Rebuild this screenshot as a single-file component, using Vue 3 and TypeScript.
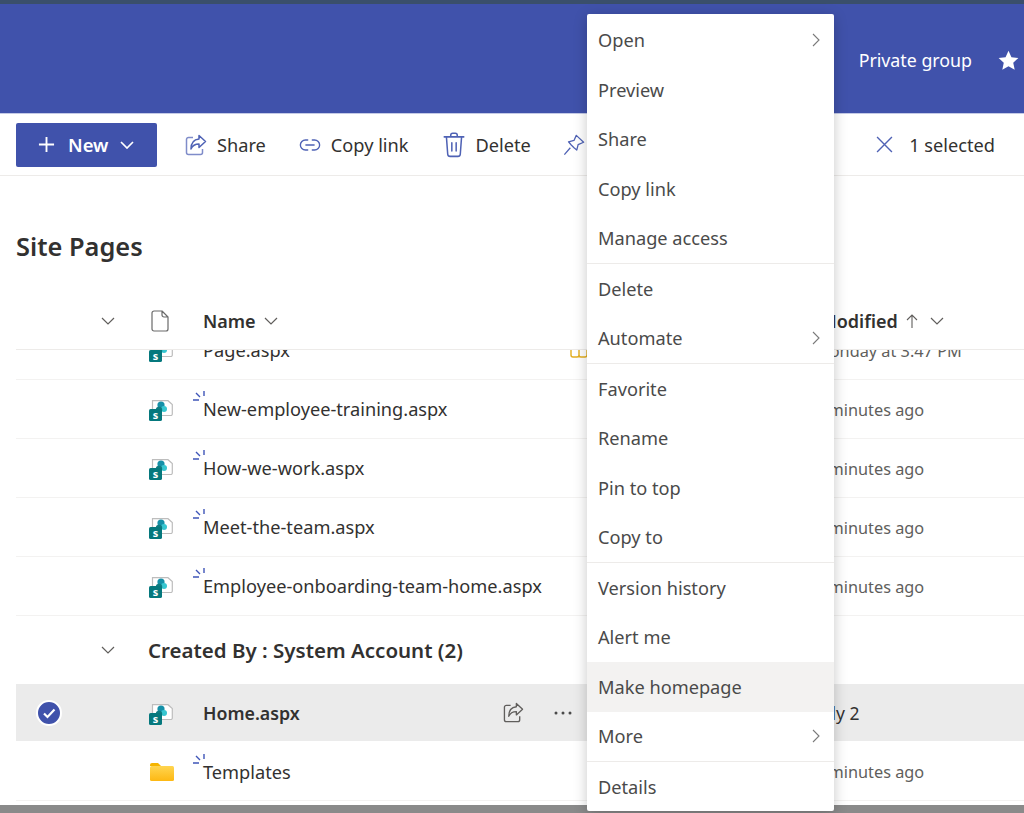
<script setup lang="ts">
interface FileRow {
  name: string
  modified: string
  kind: 'page' | 'folder'
  fresh?: boolean
  selected?: boolean
  badge?: boolean
}

interface MenuItem {
  label: string
  submenu?: boolean
  hover?: boolean
}

const topRows: FileRow[] = [
  { name: 'Page.aspx', modified: 'Monday at 3:47 PM', kind: 'page', badge: true },
  { name: 'New-employee-training.aspx', modified: '6 minutes ago', kind: 'page', fresh: true },
  { name: 'How-we-work.aspx', modified: '6 minutes ago', kind: 'page', fresh: true },
  { name: 'Meet-the-team.aspx', modified: '6 minutes ago', kind: 'page', fresh: true },
  { name: 'Employee-onboarding-team-home.aspx', modified: '6 minutes ago', kind: 'page', fresh: true }
]

const bottomRows: FileRow[] = [
  { name: 'Home.aspx', modified: 'July 2', kind: 'page', selected: true },
  { name: 'Templates', modified: '6 minutes ago', kind: 'folder', fresh: true }
]

const menuGroups: MenuItem[][] = [
  [
    { label: 'Open', submenu: true },
    { label: 'Preview' },
    { label: 'Share' },
    { label: 'Copy link' },
    { label: 'Manage access' }
  ],
  [{ label: 'Delete' }, { label: 'Automate', submenu: true }],
  [{ label: 'Favorite' }, { label: 'Rename' }, { label: 'Pin to top' }, { label: 'Copy to' }],
  [
    { label: 'Version history' },
    { label: 'Alert me' },
    { label: 'Make homepage', hover: true },
    { label: 'More', submenu: true }
  ],
  [{ label: 'Details' }]
]

// group header sits between the two row lists
const listSections = [
  { key: 'top', title: '', rows: topRows },
  { key: 'system', title: 'Created By : System Account (2)', rows: bottomRows }
]
</script>

<template>
  <div class="page">
    <header class="banner">
      <span class="privacy">Private group</span>
      <svg class="star" viewBox="0 0 20 20"><path d="M10 .8l2.800 6.100 6.600.7-4.900 4.500 1.400 6.600L10 15.400l-5.900 3.300 1.400-6.600L.6 7.600l6.600-.7z" fill="#fff" /></svg>
    </header>

    <div class="toolbar">
      <button class="new-btn">
        <svg class="new-plus" viewBox="0 0 18 18"><path d="M9 1v16M1 9h16" stroke="#fff" stroke-width="2" fill="none" /></svg>
        <span>New</span>
        <svg class="new-chevron" viewBox="0 0 14 8"><path d="M1 1l6 6 6-6" stroke="#fff" stroke-width="1.700" fill="none" /></svg>
      </button>
      <div class="cmd cmd-share">
        <svg class="cmd-icon" viewBox="0 0 22 22" fill="none" stroke="#4f62b5" stroke-width="1.500">
          <path d="M8 3.500H3.500a2 2 0 0 0-2 2v13a2 2 0 0 0 2 2h12a2 2 0 0 0 2-2v-3.500" stroke="#7f8cc9" />
          <path d="M14 1.500l6.500 6-6.500 6V10c-4 0-6.500 1.500-8 5 0-6 3-9.500 8-10z" stroke-linejoin="round" />
        </svg>
        <span>Share</span>
      </div>
      <div class="cmd cmd-link">
        <svg class="cmd-icon" viewBox="0 0 24 14" fill="none" stroke="#4f62b5" stroke-width="1.500">
          <path d="M9.500 1.500H7a5.500 5.500 0 0 0 0 11h2.500M14.500 1.500H17a5.500 5.500 0 0 1 0 11h-2.500M7.500 7h9" stroke-linecap="round" />
        </svg>
        <span>Copy link</span>
      </div>
      <div class="cmd cmd-delete">
        <svg class="cmd-icon trash" viewBox="0 0 20 24" fill="none" stroke="#4f62b5" stroke-width="1.400">
          <path d="M1 4.500h18M7 4.500V3a1.800 1.800 0 0 1 1.800-1.800h2.400A1.800 1.800 0 0 1 13 3v1.500M3 4.500l1.200 16a2.200 2.200 0 0 0 2.200 2h7.200a2.200 2.200 0 0 0 2.200-2l1.200-16M8 10v7.500M12 10v7.500" stroke-linecap="round" />
        </svg>
        <span>Delete</span>
      </div>
      <div class="cmd cmd-pin">
        <svg class="cmd-icon" viewBox="0 0 24 24" fill="none" stroke="#4f62b5" stroke-width="1.400">
          <path d="M14.500 1.500l8 7.500-6 2.500-1.500 6-3-2.500-3-3-3-3.500 6-1.500zM8 15l-6.500 7.500" stroke-linejoin="round" />
        </svg>
      </div>
      <div class="selection">
        <svg class="clear" viewBox="0 0 16 16"><path d="M1 1l14 14M15 1L1 15" stroke="#4f62b5" stroke-width="1.300" fill="none" /></svg>
        <span>1 selected</span>
      </div>
    </div>

    <h1 class="title">Site Pages</h1>

    <div class="columns">
      <span class="cell-check"></span>
      <span class="cell-chevron">
        <svg class="chevron" viewBox="0 0 14 8"><path d="M1 1l6 6 6-6" stroke="#605e5c" stroke-width="1.200" fill="none" /></svg>
      </span>
      <span class="cell-icon">
        <svg class="doc-head" viewBox="0 0 18 22" fill="none" stroke="#6a6a6a" stroke-width="1.200">
          <path d="M3 1h8l6 6v12a2 2 0 0 1-2 2H3a2 2 0 0 1-2-2V3a2 2 0 0 1 2-2zM11 1v4a2 2 0 0 0 2 2h4" stroke-linejoin="round" />
        </svg>
      </span>
      <span class="col-name">
        Name
        <svg class="chevron" viewBox="0 0 14 8"><path d="M1 1l6 6 6-6" stroke="#605e5c" stroke-width="1.200" fill="none" /></svg>
      </span>
      <span class="col-modified">
        Modified
        <svg class="sort-arrow" viewBox="0 0 12 14"><path d="M6 14V1M1 6l5-5 5 5" stroke="#605e5c" stroke-width="1.100" fill="none" /></svg>
        <svg class="chevron" viewBox="0 0 14 8"><path d="M1 1l6 6 6-6" stroke="#605e5c" stroke-width="1.200" fill="none" /></svg>
      </span>
    </div>

    <div class="list">
      <section v-for="section in listSections" :key="section.key">
        <div v-if="section.title" class="group-row">
          <span class="cell-check"></span>
          <span class="cell-chevron">
            <svg class="chevron" viewBox="0 0 14 8"><path d="M1 1l6 6 6-6" stroke="#605e5c" stroke-width="1.200" fill="none" /></svg>
          </span>
          <strong class="group-title">{{ section.title }}</strong>
        </div>
        <div
          v-for="row in section.rows"
          :key="row.name"
          class="row"
          :class="{ selected: row.selected }"
        >
          <span class="cell-check">
            <svg v-if="row.selected" class="check" viewBox="0 0 26 26">
              <circle cx="13" cy="13" r="12" fill="#4052ab" stroke="#fff" stroke-width="2" />
              <path d="M8 13.500l3.500 3.500 7-7.500" stroke="#fff" stroke-width="2.200" fill="none" />
            </svg>
          </span>
          <span class="cell-chevron"></span>
          <span class="cell-icon">
            <svg v-if="row.kind === 'page'" class="file-icon" viewBox="0 0 24 21">
              <path d="M3.500 .7h15.500l4.300 3.800v9.500a1.500 1.500 0 0 1-1.500 1.500H3.500z" fill="#fff" stroke="#bdbdbd" stroke-width="1.200" />
              <circle cx="12" cy="5" r="3.600" fill="#1490a8" />
              <circle cx="15" cy="9" r="3" fill="#37c6d0" />
              <circle cx="10" cy="10" r="3.200" fill="#0f7b80" />
              <rect x="0" y="9" width="13" height="12" rx="1.600" fill="#05787d" />
              <text x="6.500" y="18.700" class="file-s">s</text>
            </svg>
            <svg v-else class="folder-icon" viewBox="0 0 26 20">
              <defs>
                <linearGradient id="folder-fill" x1="0" y1="0" x2="0" y2="1">
                  <stop offset="0" stop-color="#ffd550" />
                  <stop offset="1" stop-color="#fdb813" />
                </linearGradient>
              </defs>
              <path d="M1 3a2 2 0 0 1 2-2h6l3 3H1z" fill="#f5b400" />
              <rect x="1" y="4" width="24" height="15" rx="1.500" fill="url(#folder-fill)" />
            </svg>
          </span>
          <span class="col-name">
            <svg v-if="row.fresh" class="sparkle" viewBox="0 0 12 12" fill="none" stroke="#3f55b8" stroke-width="1.400">
              <path d="M11 0v5M3 2l4 4M0 9h6" />
            </svg>
            <span class="file-name">{{ row.name }}</span>
            <svg v-if="row.badge" class="book" viewBox="0 0 18 16" fill="none" stroke="#e3ae1f" stroke-width="1.400">
              <path d="M1 1v12q0 2 2 2h4q2 0 2-2 0 2 2 2h4q2 0 2-2V1M9 1v12" />
            </svg>
            <span v-if="row.selected" class="row-actions">
              <svg class="row-share" viewBox="0 0 22 22" fill="none" stroke="#605e5c" stroke-width="1.400">
                <path d="M8 3.500H3.500a2 2 0 0 0-2 2v13a2 2 0 0 0 2 2h12a2 2 0 0 0 2-2v-3.500" />
                <path d="M14 1.500l6.500 6-6.500 6V10c-4 0-6.500 1.500-8 5 0-6 3-9.500 8-10z" stroke-linejoin="round" />
              </svg>
              <svg class="row-more" viewBox="0 0 18 4" fill="#4a4a4a">
                <circle cx="2" cy="2" r="1.500" /><circle cx="9" cy="2" r="1.500" /><circle cx="16" cy="2" r="1.500" />
              </svg>
            </span>
          </span>
          <span class="col-when">{{ row.modified }}</span>
        </div>
      </section>
    </div>

    <div class="scroll-edge"></div>

    <nav class="menu">
      <div v-for="(group, i) in menuGroups" :key="i" class="menu-group">
        <div
          v-for="item in group"
          :key="item.label"
          class="menu-item"
          :class="{ hover: item.hover }"
        >
          <span>{{ item.label }}</span>
          <svg v-if="item.submenu" class="menu-arrow" viewBox="0 0 8 14"><path d="M1 1l6 6-6 6" stroke="#7a7a7a" stroke-width="1.100" fill="none" /></svg>
        </div>
      </div>
    </nav>
  </div>
</template>

<style scoped>
.page {
  position: relative;
  display: flex;
  flex-direction: column;
  width: 1024px;
  height: 813px;
  overflow: hidden;
  background: #fff;
  color: #323130;
  font-family: "Noto Sans", "Open Sans", sans-serif;
  font-size: 18.2px;
}

.banner {
  flex: none;
  display: flex;
  align-items: center;
  justify-content: flex-end;
  height: 113px;
  padding-top: 3px;
  box-sizing: border-box;
  border-top: 4px solid #3a4f6b;
  background: #4052ab;
  color: #fff;
}

.privacy {
  margin-right: 26px;
  font-size: 17.800px;
}

.star {
  width: 21px;
  height: 21px;
  margin-right: 5px;
}

.toolbar {
  flex: none;
  display: flex;
  align-items: center;
  height: 63px;
  padding-left: 16px;
  box-sizing: border-box;
  border-top: 1px solid #c4cae6;
  border-bottom: 1px solid #edebe9;
}

.new-btn {
  display: flex;
  align-items: center;
  width: 141px;
  height: 44px;
  padding: 0 0 0 22px;
  border: 0;
  border-radius: 2px;
  background: #4052ab;
  color: #fff;
  font: 600 18.5px "Noto Sans", sans-serif;
}

.new-plus {
  width: 17px;
  height: 17px;
  margin-right: 13px;
}

.new-chevron {
  width: 14px;
  height: 8px;
  margin-left: 12px;
}

.cmd {
  display: flex;
  align-items: center;
  flex: none;
}

.cmd-icon {
  width: 22px;
  height: 22px;
  margin-right: 10px;
}

.cmd-icon.trash {
  height: 26px;
  margin-right: 11px;
}

.cmd-share {
  margin-left: 28px;
}

.cmd-link {
  margin-left: 33px;
}

.cmd-delete {
  margin-left: 34px;
}

.cmd-pin {
  margin-left: 32px;
}

.selection {
  position: absolute;
  right: 29px;
  display: flex;
  align-items: center;
}

.clear {
  width: 17px;
  height: 17px;
  margin-right: 16px;
}

.title {
  flex: none;
  margin: 0;
  padding: 53px 0 29px 16px;
  font-size: 25.4px;
  line-height: 34px;
  font-weight: 600;
}

.columns,
.row,
.group-row {
  display: grid;
  grid-template-columns: 66px 52px 52px 629px 1fr;
  align-items: center;
  margin-left: 16px;
}

.columns {
  flex: none;
  height: 58px;
  box-sizing: border-box;
  border-bottom: 1px solid #edebe9;
  font-size: 18px;
  font-weight: 600;
}

.cell-check,
.cell-chevron,
.cell-icon {
  display: flex;
  align-items: center;
  justify-content: center;
}

.chevron {
  width: 14px;
  height: 8px;
}

.doc-head {
  width: 18px;
  height: 22px;
}

.col-name {
  position: relative;
  display: flex;
  align-items: center;
  padding-left: 17px;
}

.col-name .chevron {
  margin-left: 8px;
}

.col-modified {
  display: flex;
  align-items: center;
  padding-left: 5px;
}

.sort-arrow {
  width: 12px;
  height: 14px;
  margin: 0 12px 0 8px;
}

.list {
  flex: 1;
  min-height: 0;
  overflow: hidden;
}

.list section:first-child {
  margin-top: -29px;
}

.row {
  height: 59px;
  box-sizing: border-box;
  border-bottom: 1px solid #f3f2f1;
}

.group-row {
  height: 68px;
  padding-bottom: 1px;
  box-sizing: border-box;
}

.group-title {
  grid-column: 3 / 5;
  padding-left: 14px;
  font-size: 20.500px;
  font-weight: 600;
}

.selected {
  height: 57px;
  border-bottom: 0;
  background: #ebebeb;
}

.selected + .row {
  height: 60px;
  padding-top: 2px;
}

.selected .file-name {
  font-size: 17.800px;
  font-weight: 600;
}

.check {
  width: 26px;
  height: 26px;
}

.file-icon {
  width: 24px;
  height: 21px;
  margin: 3px 0 0 2px;
}

.file-s {
  fill: #fff;
  font-size: 11px;
  font-weight: 700;
  text-anchor: middle;
}

.folder-icon {
  width: 26px;
  height: 20px;
  margin-left: 3px;
}

.sparkle {
  position: absolute;
  left: 7px;
  top: -6px;
  width: 12px;
  height: 12px;
}

.file-name {
  margin-right: auto;
}

.book {
  width: 18px;
  height: 16px;
  margin-right: 227px;
}

.row-actions {
  display: flex;
  align-items: center;
  gap: 30px;
  margin-right: 243px;
}

.row-share {
  width: 21px;
  height: 21px;
}

.row-more {
  width: 18px;
  height: 4px;
}

.col-when {
  padding-top: 1px;
  color: #605e5c;
  font-size: 16.300px;
}

.selected .col-when {
  margin-left: 1px;
  color: #323130;
  font-size: 17.500px;
}

.scroll-edge {
  flex: none;
  height: 8px;
  background: #8a8a8a;
}

.menu {
  position: absolute;
  left: 587px;
  top: 14px;
  width: 247px;
  height: 797px;
  box-sizing: border-box;
  padding-top: 1.700px;
  border-radius: 2px;
  background: #fff;
  box-shadow: 0 3px 14px rgba(0, 0, 0, 0.22);
}

.menu-group + .menu-group {
  border-top: 1.500px solid #edebe9;
}

.menu-item {
  display: flex;
  align-items: center;
  justify-content: space-between;
  height: 49.500px;
  padding: 0 14px 0 11px;
  box-sizing: border-box;
  color: #4a4a4a;
}

.menu-item.hover {
  background: #f3f2f1;
}

.menu-arrow {
  width: 8px;
  height: 14px;
}
</style>

<style>
html,
body {
  margin: 0;
  background: #fff;
}
</style>
